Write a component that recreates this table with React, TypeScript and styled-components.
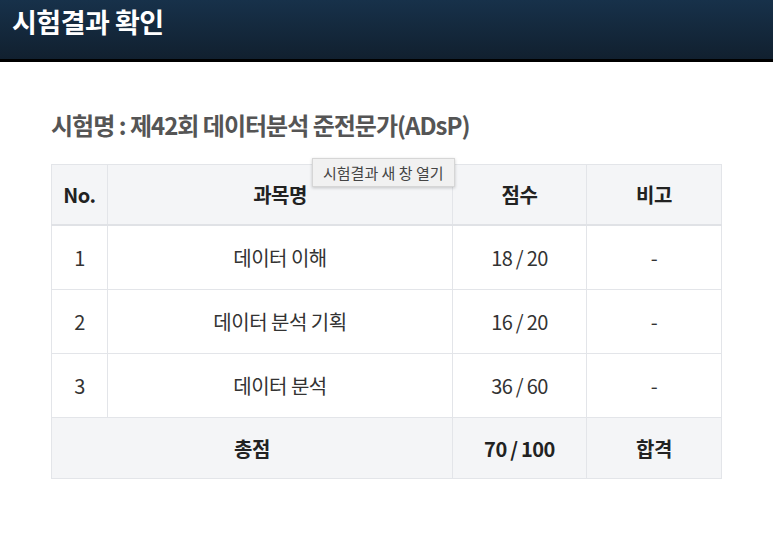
import React from "react";
import styled, { createGlobalStyle } from "styled-components";

const Global = createGlobalStyle`
  html, body { margin: 0; padding: 0; background: #fff; }
  body { font-family: "Noto Sans CJK KR", "Noto Sans", sans-serif; }
`;

const Header = styled.header`
  height: 59px;
  background: linear-gradient(180deg, #17314a 0%, #11202f 100%);
  border-bottom: 3px solid #000;
  display: flex;
  align-items: center;
  padding: 0 12px;
  box-sizing: content-box;
`;

const HeaderTitle = styled.h1`
  margin: 0 0 16px 0;
  color: #fff;
  font-size: 27px;
  font-weight: 700;
  letter-spacing: -0.5px;
`;

const Main = styled.main`
  padding: 46px 51px 0 51px;
`;

const ExamTitle = styled.h2`
  margin: 0 0 22px 0;
  font-size: 24px;
  font-weight: 700;
  color: #555;
  letter-spacing: -1px;
  line-height: 34px;
`;

const Table = styled.table`
  width: 671px;
  border-collapse: collapse;
  border: 1px solid #e3e5e9;
  table-layout: fixed;
`;

const Th = styled.th<{ $w?: number }>`
  width: ${(p) => (p.$w ? `${p.$w}px` : "auto")};
  height: 59px;
  background: #f4f5f7;
  border: 1px solid #e3e5e9;
  border-bottom: 2px solid #e0e2e6;
  font-size: 20px;
  font-weight: 700;
  color: #222;
  text-align: center;
  padding: 0;
  letter-spacing: -0.5px;
`;

const Td = styled.td<{ $foot?: boolean }>`
  height: ${(p) => (p.$foot ? 60 : 63)}px;
  border: 1px solid #e3e5e9;
  text-align: center;
  padding: 0;
  font-size: 20px;
  color: ${(p) => (p.$foot ? "#222" : "#333")};
  font-weight: ${(p) => (p.$foot ? 700 : 400)};
  background: ${(p) => (p.$foot ? "#f4f5f7" : "#fff")};
  letter-spacing: -0.5px;
`;

const Tooltip = styled.div`
  position: absolute;
  left: 312px;
  top: 158px;
  padding: 3px 11px 3px 10px;
  background: #f1f1f1;
  border: 1px solid #d6d6d6;
  box-shadow: 0 1px 3px rgba(0, 0, 0, 0.2);
  font-size: 15px;
  color: #444;
  line-height: 21px;
  white-space: nowrap;
  z-index: 2;
`;

const rows = [
  { no: "1", name: "데이터 이해", score: "18\u2009/\u200920", note: "-" },
  { no: "2", name: "데이터 분석 기획", score: "16\u2009/\u200920", note: "-" },
  { no: "3", name: "데이터 분석", score: "36\u2009/\u200960", note: "-" },
];

export default function App() {
  return (
    <>
      <Global />
      <Header>
        <HeaderTitle>시험결과 확인</HeaderTitle>
      </Header>
      <Main>
        <ExamTitle>시험명 : 제42회 데이터분석 준전문가(ADsP)</ExamTitle>
        <Table>
          <thead>
            <tr>
              <Th $w={55}>No.</Th>
              <Th>과목명</Th>
              <Th $w={133}>점수</Th>
              <Th $w={134}>비고</Th>
            </tr>
          </thead>
          <tbody>
            {rows.map((r) => (
              <tr key={r.no}>
                <Td>{r.no}</Td>
                <Td>{r.name}</Td>
                <Td>{r.score}</Td>
                <Td>{r.note}</Td>
              </tr>
            ))}
            <tr>
              <Td $foot colSpan={2}>총점</Td>
              <Td $foot>70{"\u2009/\u2009"}100</Td>
              <Td $foot>합격</Td>
            </tr>
          </tbody>
        </Table>
      </Main>
      <Tooltip>시험결과 새 창 열기</Tooltip>
    </>
  );
}
